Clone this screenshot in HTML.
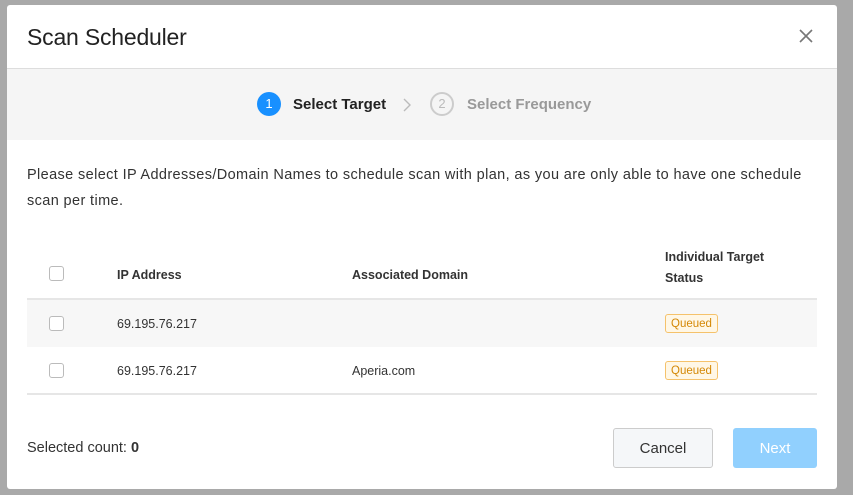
<!DOCTYPE html>
<html><head><meta charset="utf-8"><style>
*{margin:0;padding:0;box-sizing:border-box}
body{width:853px;height:495px;background:#a9a9a9;font-family:"Liberation Sans",sans-serif;position:relative;overflow:hidden;color:#333}
.modal{position:absolute;left:7px;top:5px;width:830px;height:484px;background:#fff;border-radius:3px}
.title{position:absolute;left:20px;top:19px;font-size:23px;color:#222;letter-spacing:-0.2px}
.close{position:absolute;left:790px;top:22px;width:18px;height:18px}
.hdrline{position:absolute;left:0;top:63px;width:830px;height:1px;background:#ddd}
.stepper{position:absolute;left:0;top:64px;width:830px;height:71px;background:#f5f5f5}
.c{position:absolute;width:24px;height:24px;border-radius:50%;font-size:13px;text-align:center;line-height:24px;top:23px}
.c1{left:250px;background:#1890ff;color:#fff}
.c2{left:423px;border:2px solid #ccc;color:#bbb;line-height:20px}
.s{position:absolute;top:27px;font-size:15px;font-weight:bold}
.desc{position:absolute;left:20px;top:157px;width:785px;font-size:14.5px;line-height:26px;color:#333;letter-spacing:0.38px}
.th{position:absolute;font-size:12.5px;font-weight:bold;color:#333}
.td{position:absolute;font-size:12.5px;color:#333}
.cb{position:absolute;left:42px;width:15px;height:15px;border:1px solid #bbb;border-radius:3px;background:#fff}
.tag{position:absolute;left:658px;width:53px;height:19px;border:1px solid #f5c26b;background:#fff7e6;color:#d48806;font-size:11.5px;display:flex;align-items:center;justify-content:center;border-radius:3px}
.btn{position:absolute;top:423px;height:40px;border-radius:3px;font-size:15px;display:flex;align-items:center;justify-content:center}
</style></head><body>
<div class="modal">
<div class="title">Scan Scheduler</div>
<svg class="close" viewBox="0 0 18 18"><path d="M3 3L15 15M15 3L3 15" stroke="#777" stroke-width="1.6"/></svg>
<div class="hdrline"></div>
<div class="stepper">
<div class="c c1">1</div>
<div class="s" style="left:286px;color:#222">Select Target</div>
<svg style="position:absolute;left:394px;top:28px" width="12" height="16" viewBox="0 0 12 16"><path d="M3 2L9 8L3 14" stroke="#bbb" stroke-width="1.4" fill="none"/></svg>
<div class="c c2">2</div>
<div class="s" style="left:460px;color:#999">Select Frequency</div>
</div>
<div class="desc">Please select IP Addresses/Domain Names to schedule scan with plan, as you are only able to have one schedule scan per time.</div>
<div class="cb" style="top:261px"></div>
<div class="th" style="left:110px;top:263px">IP Address</div>
<div class="th" style="left:345px;top:263px">Associated Domain</div>
<div class="th" style="left:658px;top:242px;line-height:21px">Individual Target<br>Status</div>
<div style="position:absolute;left:20px;top:293px;width:790px;height:2px;background:#e6e6e6"></div>
<div style="position:absolute;left:20px;top:295px;width:790px;height:47px;background:#f7f7f7"></div>
<div class="cb" style="top:311px"></div>
<div class="td" style="left:110px;top:312px">69.195.76.217</div>
<div class="tag" style="top:309px">Queued</div>
<div class="cb" style="top:358px"></div>
<div class="td" style="left:110px;top:359px">69.195.76.217</div>
<div class="td" style="left:345px;top:359px">Aperia.com</div>
<div class="tag" style="top:356px">Queued</div>
<div style="position:absolute;left:20px;top:388px;width:790px;height:2px;background:#e6e6e6"></div>
<div style="position:absolute;left:20px;top:435px;font-size:14.5px">Selected count: <b>0</b></div>
<div class="btn" style="left:606px;width:100px;border:1px solid #ccc;background:#f5f7f9;color:#333">Cancel</div>
<div class="btn" style="left:726px;width:84px;background:#91d0fe;color:#fff">Next</div>
</div>
</body></html>
